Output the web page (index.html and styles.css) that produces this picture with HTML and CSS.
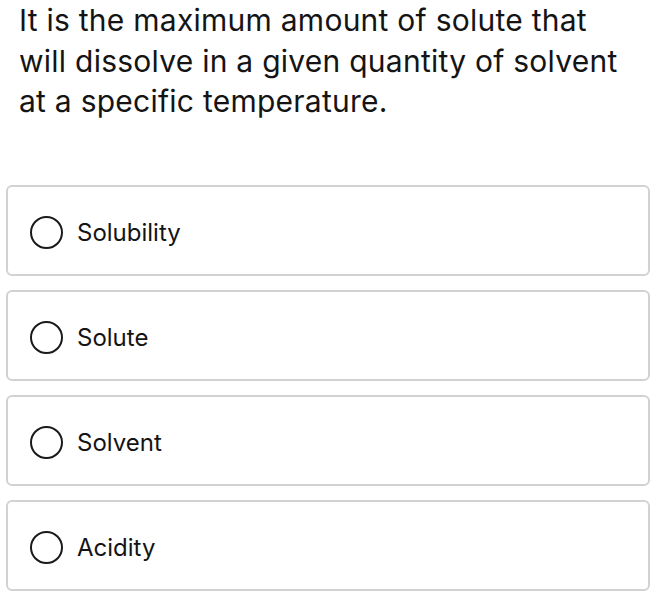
FILE: index.html
```html
<!DOCTYPE html>
<html>
<head>
<meta charset="utf-8">
<link rel="stylesheet" href="styles.css">
</head>
<body>
<div class="page">
  <p class="question">It is the maximum amount of solute that<br>will dissolve in a given quantity of solvent<br>at a specific temperature.</p>
  <div class="options">
    <div class="option"><span class="radio"></span><span class="label">Solubility</span></div>
    <div class="option"><span class="radio"></span><span class="label">Solute</span></div>
    <div class="option"><span class="radio"></span><span class="label">Solvent</span></div>
    <div class="option"><span class="radio"></span><span class="label">Acidity</span></div>
  </div>
</div>
</body>
</html>
```

FILE: styles.css
```css
html, body {
  margin: 0;
  padding: 0;
  background: #fff;
}
.page {
  font-family: Inter, "Liberation Sans", sans-serif;
  color: #141414;
  padding: 0 5px 0 6px;
}
.question {
  margin: 0;
  padding: 0 0 0 13px;
  font-size: 30px;
  letter-spacing: 0.25px;
  line-height: 40.5px;
  white-space: nowrap;
}
.options {
  margin-top: 63px;
  display: flex;
  flex-direction: column;
  gap: 14px;
}
.option {
  box-sizing: border-box;
  height: 91px;
  border: 2px solid #d2d2d2;
  border-radius: 6px;
  display: flex;
  align-items: center;
  padding-left: 22px;
  padding-top: 4px;
}
.radio {
  box-sizing: border-box;
  width: 33px;
  height: 33px;
  border: 2px solid #1a1a1a;
  border-radius: 50%;
  flex: none;
}
.label {
  margin-left: 14px;
  font-size: 24px;
}
```
